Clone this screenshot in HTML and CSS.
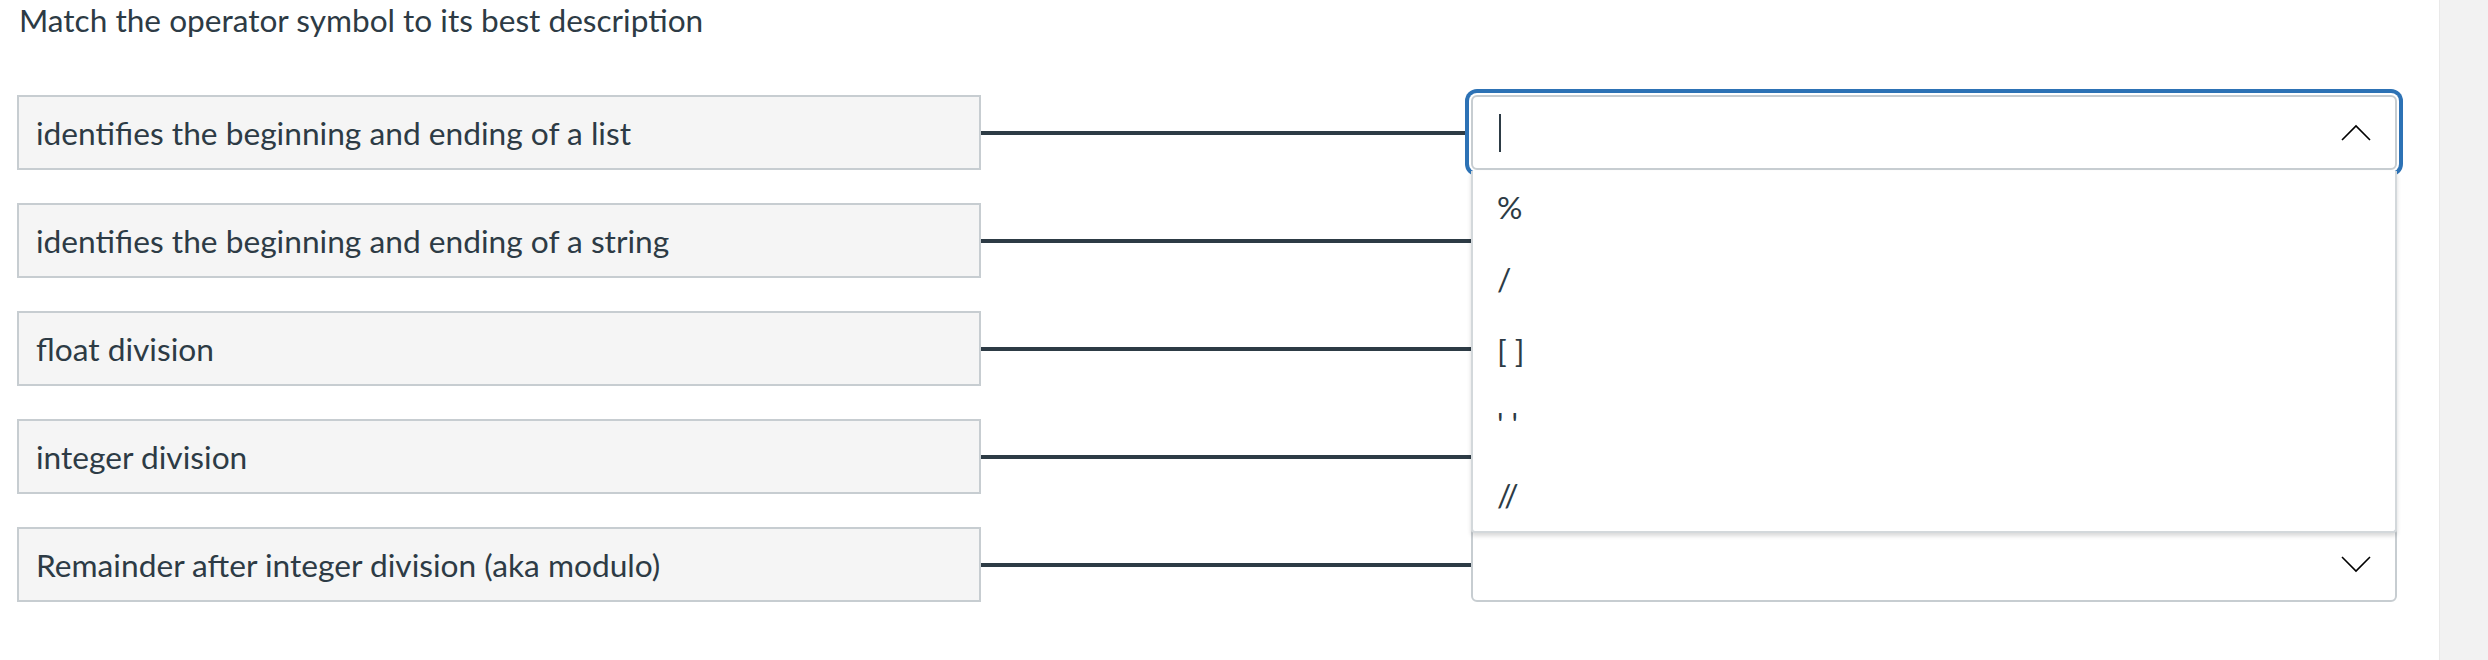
FILE: index.html
```html
<!DOCTYPE html>
<html lang="en">
<head>
    <meta charset="UTF-8">
    <meta name="viewport" content="width=device-width, initial-scale=1.0">
    <title>Matching Question</title>
    <link rel="stylesheet" href="styles.css">
</head>
<body>
    <div class="page">
        <div class="question">
            <div class="question-text">Match the operator symbol to its best description</div>

            <div class="answers">
                <div class="row">
                    <div class="prompt">identifies the beginning and ending of a list</div>
                    <div class="connector"></div>
                    <div class="select-wrap">
                        <div class="select is-open">
                            <span class="caret"></span>
                            <svg class="chevron" width="30" height="17" viewBox="0 0 30 17"><polyline points="1,16 15,2 29,16" fill="none" stroke="#000" stroke-width="1.6"/></svg>
                        </div>
                        <ul class="options">
                            <li>%</li>
                            <li>/</li>
                            <li>[ ]</li>
                            <li>' '</li>
                            <li>//</li>
                        </ul>
                    </div>
                </div>

                <div class="row">
                    <div class="prompt">identifies the beginning and ending of a string</div>
                    <div class="connector"></div>
                    <div class="select-wrap">
                        <div class="select">
                            <svg class="chevron" width="30" height="17" viewBox="0 0 30 17"><polyline points="1,1 15,15 29,1" fill="none" stroke="#000" stroke-width="1.6"/></svg>
                        </div>
                    </div>
                </div>

                <div class="row">
                    <div class="prompt">float division</div>
                    <div class="connector"></div>
                    <div class="select-wrap">
                        <div class="select">
                            <svg class="chevron" width="30" height="17" viewBox="0 0 30 17"><polyline points="1,1 15,15 29,1" fill="none" stroke="#000" stroke-width="1.6"/></svg>
                        </div>
                    </div>
                </div>

                <div class="row">
                    <div class="prompt">integer division</div>
                    <div class="connector"></div>
                    <div class="select-wrap">
                        <div class="select">
                            <svg class="chevron" width="30" height="17" viewBox="0 0 30 17"><polyline points="1,1 15,15 29,1" fill="none" stroke="#000" stroke-width="1.6"/></svg>
                        </div>
                    </div>
                </div>

                <div class="row">
                    <div class="prompt">Remainder after integer division (aka modulo)</div>
                    <div class="connector"></div>
                    <div class="select-wrap">
                        <div class="select">
                            <svg class="chevron" width="30" height="17" viewBox="0 0 30 17"><polyline points="1,1 15,15 29,1" fill="none" stroke="#000" stroke-width="1.6"/></svg>
                        </div>
                    </div>
                </div>
            </div>
        </div>
        <div class="scroll-track"></div>
    </div>
</body>
</html>
```

FILE: styles.css
```css
body { margin: 0; font-family: Lato, "Noto Sans", sans-serif; color: #2d3b45; background: #fff; }
.page { display: flex; height: 660px; }
.question { flex: 1; padding: 0 0 0 17px; }
.question-text { font-size: 31.6px; line-height: 40px; padding: 0 0 0 2px; }

.answers { display: flex; flex-direction: column; gap: 33px; margin-top: 55px; }
.row { display: grid; grid-template-columns: 964px 490px 926px; align-items: center; height: 75px; }

.prompt { box-sizing: border-box; height: 75px; display: flex; align-items: center; padding: 0 17px; font-size: 31.7px; background: #f5f5f5; border: 2px solid #c7cdd1; }
.connector { height: 4px; background: #2d3b45; }

.select-wrap { position: relative; height: 75px; }
.select { box-sizing: border-box; height: 75px; display: flex; align-items: center; justify-content: space-between; padding: 0 24px 0 26px; border: 2px solid #c7cdd1; border-radius: 6px; background: #fff; }
.select .chevron { margin-left: auto; }
.select.is-open { box-shadow: 0 0 0 2px #fff, 0 0 0 6px #2d72b5; position: relative; z-index: 2; }
.caret { width: 2px; height: 38px; background: #2d3b45; }

.options { position: absolute; top: 76px; left: 0; right: 0; z-index: 3; margin: 0; padding: 0; list-style: none; background: #fff; border: 2px solid #d3d8db; border-top: none; border-radius: 0 0 4px 4px; box-shadow: 0 3px 4px rgba(0, 0, 0, 0.15); }
.options li { height: 72px; display: flex; align-items: center; padding: 0 24px; font-size: 31.7px; }

.scroll-track { width: 48px; background: #f2f2f2; border-left: 1px solid #e9e9e9; }
```
